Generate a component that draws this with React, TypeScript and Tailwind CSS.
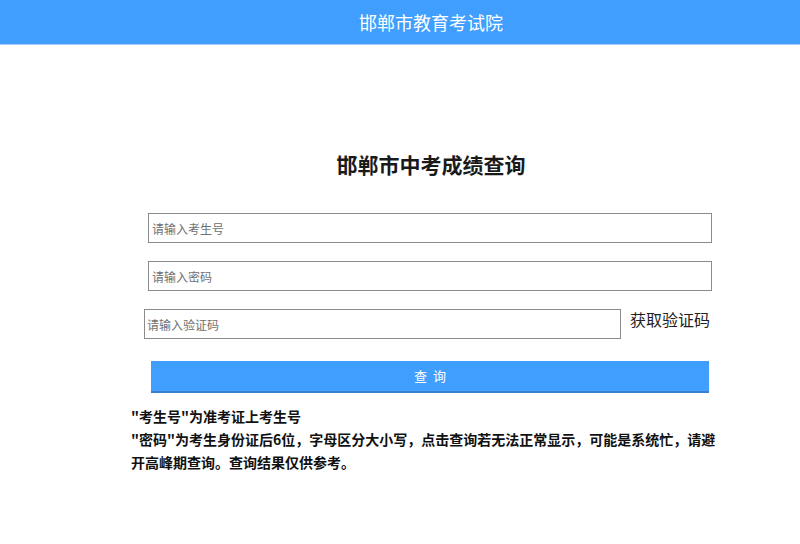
import React from "react";

const font = { fontFamily: '"Microsoft YaHei", "Noto Sans CJK SC", "Noto Sans", sans-serif' };

export default function App() {
  return (
    <div className="min-h-[544px] w-full bg-white" style={font}>
      {/* top banner */}
      <header className="h-[45px] w-full border-b border-[#a6cdf7] bg-[#409eff]">
        <div className="ml-[131px] flex h-[44px] w-[600px] items-center justify-center text-[18px] text-white">
          邯郸市教育考试院
        </div>
      </header>

      <main className="ml-[131px] w-[600px]">
        <h1 className="mt-[103px] text-center text-[21px] font-bold leading-[32px] text-[#1a1a1a]">
          邯郸市中考成绩查询
        </h1>

        <form className="mt-[33px] flex flex-col" onSubmit={(e) => e.preventDefault()}>
          <input
            type="text"
            placeholder="请输入考生号"
            className="ml-[17px] h-[30px] w-[564px] border border-[#8a8a8a] px-[3px] text-[12px] text-[#333] outline-none placeholder:text-[#707070]"
          />
          <input
            type="password"
            placeholder="请输入密码"
            className="ml-[17px] mt-[18px] h-[30px] w-[564px] border border-[#8a8a8a] px-[3px] text-[12px] text-[#333] outline-none placeholder:text-[#707070]"
          />
          <div className="ml-[13px] mt-[18px] flex items-start">
            <input
              type="text"
              placeholder="请输入验证码"
              className="h-[30px] w-[477px] border border-[#8a8a8a] px-[2px] text-[12px] text-[#333] outline-none placeholder:text-[#707070]"
            />
            <span className="ml-[9px] mt-[-1px] text-[16px] leading-[22px] text-[#222]">获取验证码</span>
          </div>
          <button
            type="submit"
            className="ml-[20px] mt-[22px] h-[32px] w-[558px] border-b-2 border-[#3b7fd1] bg-[#409eff] pl-[6px] text-[13px] tracking-[6px] text-white"
          >
            查询
          </button>
        </form>

        <div className="mt-[12px] w-[594px] text-[14px] font-bold leading-[23px] text-[#111]">
          <p>"考生号"为准考证上考生号</p>
          <p>
            "密码"为考生身份证后6位，字母区分大小写，点击查询若无法正常显示，可能是系统忙，请避开高峰期查询。查询结果仅供参考。
          </p>
        </div>
      </main>
    </div>
  );
}
